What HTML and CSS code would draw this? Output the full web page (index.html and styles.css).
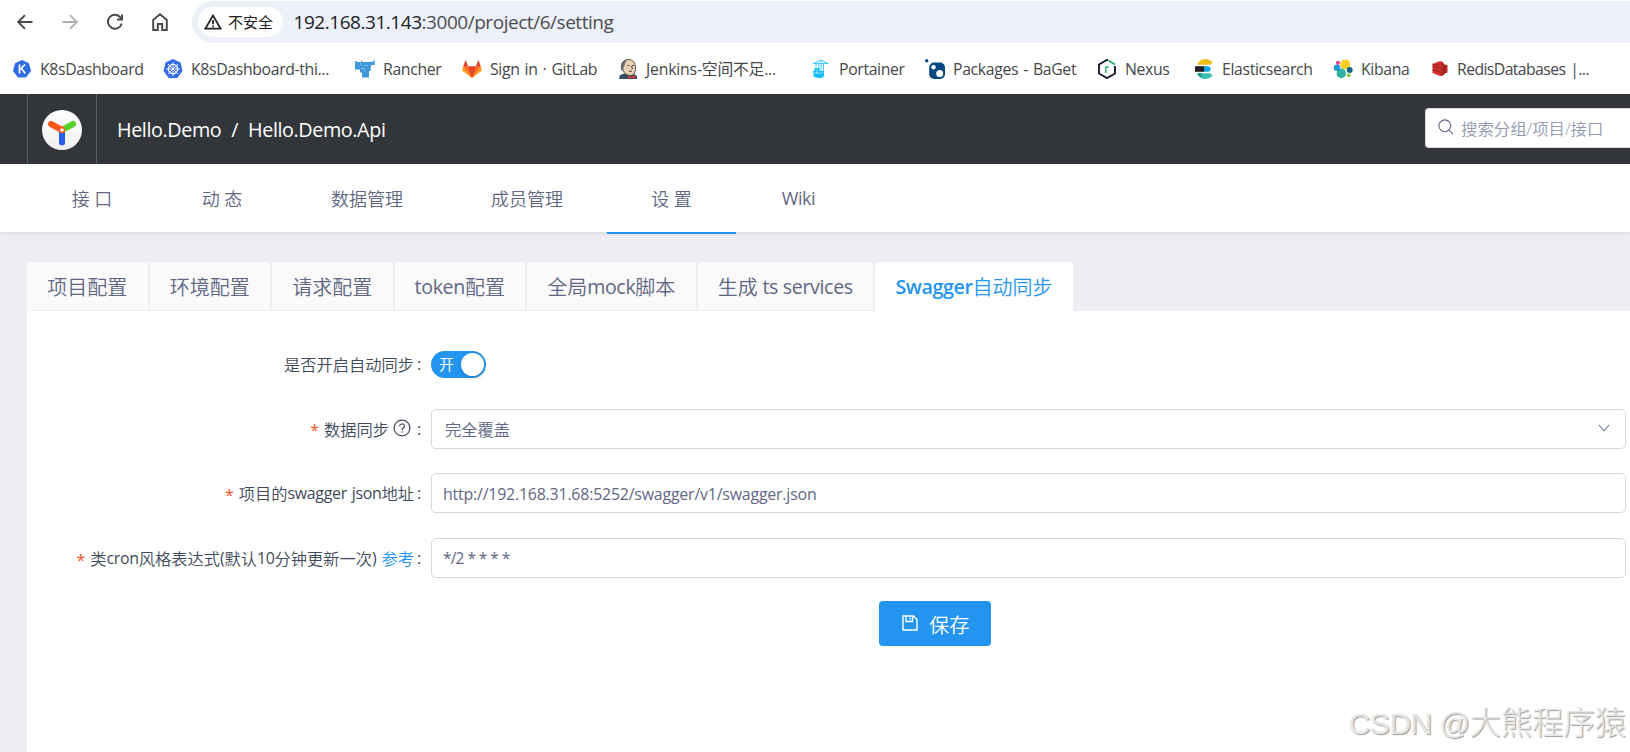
FILE: index.html
```html
<!DOCTYPE html>
<html lang="zh-CN">
<head>
<meta charset="utf-8">
<title>Hello.Demo.Api</title>
<link rel="stylesheet" href="styles.css">
</head>
<body>
<div class="toolbar">
  <div class="nav-buttons">
    <svg class="nav-icon" viewBox="0 0 20 20"><path d="M17.500 10H3.500M10 3.200 3.200 10l6.800 6.800"/></svg>
    <svg class="nav-icon disabled" viewBox="0 0 20 20"><path d="M2.500 10h14M10 3.200 16.800 10 10 16.800"/></svg>
    <svg class="nav-icon" viewBox="0 0 20 20"><path d="M16.700 11.500A7 7 0 1 1 15.500 5.500L17 7.300M17 2.500v5h-5"/></svg>
    <svg class="nav-icon" viewBox="0 0 20 20"><path d="M3.200 18V8L10 2.200 16.800 8v10h-4.600v-6H7.800v6z"/></svg>
  </div>
  <div class="omnibox">
    <div class="chip">
      <svg class="warn" viewBox="0 0 18 16"><path d="M9 1.500 1.300 14.700h15.400z"/><path d="M9 6v4.300M9 11.500v1.700"/></svg>
      <span>不安全</span>
    </div>
    <div class="url">192.168.31.143<span>:3000/project/6/setting</span></div>
  </div>
</div>
<div class="bookmarks">
  <div class="bm"><svg viewBox="0 0 20 20"><path fill="#326ce5" d="M10 1l7 3.300L19 12l-5 6.500H6L1 12l2-7.700z"/><path d="M7.500 5.500v9M13 5.500l-5 5M9.300 9.300l3.900 5.200" stroke="#fff" stroke-width="1.700" fill="none"/></svg><span>K8sDashboard</span></div>
  <div class="bm"><svg viewBox="0 0 20 20"><path fill="#326ce5" d="M10 0l7.500 3.600L19.500 12l-5.200 7H5.700L.5 12l2-8.400z"/><g stroke="#fff" fill="none"><circle cx="10" cy="10" r="4.600" stroke-width="1.400"/><path d="M10 3v14M3 10h14M5 5l10 10M15 5 5 15" stroke-width=".9"/></g></svg><span>K8sDashboard-thi...</span></div>
  <div class="bm"><svg viewBox="0 0 20 20"><path fill="#3d98d8" d="M0 2h1.500v1H6V1.500h1.200V3h9l1-.8.8 1.300L19 1l1 .5-.5 4.500H16l-.5 6h-1.500v6.500H7v-5h-2v-3H0z"/><path d="M6 9.500h3.500v3M6 6V3.500M9 6.500h4" stroke="#8cc8ee" fill="none" stroke-width=".8"/></svg><span>Rancher</span></div>
  <div class="bm"><svg viewBox="0 0 20 20"><path fill="#fca326" d="M10 19 0 11.500l1.200-4h17.600l1.200 4z"/><path fill="#fc6d26" d="m10 19-8.800-11.500h17.600z"/><path fill="#e24329" d="M10 19 6.300 7.500h7.400zM1.200 7.500 3.700 1l2.600 6.500zM18.800 7.500 16.300 1l-2.600 6.500z"/></svg><span>Sign in · GitLab</span></div>
  <div class="bm"><svg viewBox="0 0 20 20"><path fill="#335061" d="M1 20l1-4 6-2 8 1 3 2v3z"/><path fill="#e8d2b5" stroke="#4b423d" stroke-width=".9" d="M3.500 9C2.500 4 6 .5 10.500.5S17.800 4 17.500 9c0 4-1.500 7.500-5 7.500S6 15 5.500 11.500C4 12 3 10.500 3.500 9z"/><path fill="#6d6b6d" d="M3.600 10C2 4 6 .7 10 .7 6.500 2.500 7.500 5 6 7.500L5 11z"/><path d="M9.500 6.500h2M14 6.500h2M11 12.500l3-.5M13.500 7l1 3" stroke="#4b423d" fill="none"/><path fill="#e13b31" d="M10 16.500 13.500 18l3.500-1.800v3.600L13.500 18.500 10 20z"/></svg><span class="cjk">Jenkins-空间不足...</span></div>
  <div class="bm"><svg viewBox="0 0 20 20"><path d="M2 4.500h15.500M10 1v14M7.800 3.500v13M12.500 4.500v9M2.500 4.500 10 1l6.500 3.500M5 4.500V8" stroke="#2cc5ff" fill="none" stroke-width=".9"/><path fill="#13bef9" d="M2 12h1.500V9h5v3H13v5c-1.500 2-3 2-4.500 2S3.500 19 2.500 16.500z"/><path stroke="#fff" stroke-width=".5" d="M2 14h10M6 10v5" fill="none"/></svg><span>Portainer</span></div>
  <div class="bm"><svg viewBox="0 0 20 20"><circle cx="1.700" cy="1.700" r="1.700" fill="#004880"/><rect x="4.200" y="3.500" width="15.800" height="16.500" rx="5" fill="#004880"/><circle cx="8.500" cy="8.200" r="2.200" fill="#fff"/><circle cx="14.700" cy="14.500" r="3.500" fill="#fff"/></svg><span>Packages - BaGet</span></div>
  <div class="bm"><svg viewBox="0 0 20 20"><path d="M11 1.200 10 .9 2 5.500v9l8 4.600 8-4.600V7" stroke="#1b1c30" stroke-width="1.900" fill="none"/><path d="M11.500 1.500 18 5.500" stroke="#23a96b" stroke-width="1.900"/><path d="M8.700 14V7.500M8.700 9.500Q9.500 7.500 11.700 7.800" stroke="#23b36b" stroke-width="1.400" fill="none"/></svg><span>Nexus</span></div>
  <div class="bm"><svg viewBox="0 0 20 20"><path fill="#f0bf1a" d="M3 5.800C4.500 2 7.500 0 11 0c3.500 0 6 1.500 7.500 3.500-.8 1.600-2 2.300-3.500 2.300z"/><path fill="#231f20" d="M1 7.200h9v5.600H1z"/><path fill="#07a5de" d="M10 7.200h3.800a2.800 2.800 0 0 1 0 5.600H10z"/><path fill="#3ebeb0" d="M3 14.200h12c1.500 0 2.700.8 3.500 2.300C17 18.500 14.500 20 11 20c-3.500 0-6.500-2-8-5.800z"/><path fill="#2a9689" d="M3 14.200h4.500v4.600A8 8 0 0 1 3 14.200z"/></svg><span>Elasticsearch</span></div>
  <div class="bm"><svg viewBox="0 0 20 20"><ellipse cx="12.200" cy="5.400" rx="4.900" ry="5" fill="#f9cf28"/><ellipse cx="8.300" cy="14.400" rx="4.700" ry="4.900" fill="#2eb3a2"/><circle cx="5" cy="3.800" r="2.100" fill="#e8478b"/><circle cx="4" cy="8.800" r="3.300" fill="#2696d4"/><circle cx="15.600" cy="16.200" r="2" fill="#95c63d"/><circle cx="16.700" cy="11" r="3" fill="#17638e"/></svg><span>Kibana</span></div>
  <div class="bm redis"><svg viewBox="0 0 20 20"><path fill="#d4322d" d="M1.500 5 9 2l3 1v13.500L9 17l-7.500-3z"/><path fill="#b02a25" d="M10 6.500V3.500l3 .8v1l3.500.7v7.500l-3 1v1L10 17z"/><path d="m1.500 7.500 8 2.200M1.500 10.800l8 2.200M1.500 5l8 2M13 6v9" stroke="#8a1a17" fill="none" stroke-width=".8"/></svg><span>RedisDatabases |...</span></div>
</div>
<header class="header">
  <a class="logo"><svg viewBox="0 0 40 40"><defs><linearGradient id="disc" x1="0" y1="0" x2="0" y2="1"><stop offset="0" stop-color="#fff"/><stop offset="1" stop-color="#f0f0f0"/></linearGradient></defs><circle cx="20" cy="20" r="20" fill="url(#disc)"/><g stroke-width="6" stroke-linecap="round"><path d="M20 20v12.500" stroke="#2a5cf0"/><path d="m20 20 11-6" stroke="#57d02a"/><path d="M20 20 9 14" stroke="#ff561b"/></g><circle cx="20" cy="20" r="3" fill="#ff561b"/><circle cx="20" cy="20" r="1.800" fill="#fff"/></svg></a>
  <div class="crumbs"><span class="group">Hello.Demo</span><span class="slash">/</span><span class="proj">Hello.Demo.Api</span></div>
  <div class="search"><svg viewBox="0 0 16 16"><circle cx="6.800" cy="6.800" r="5.900"/><path d="m11 11.200 4 4"/></svg><span>搜索分组/项目/接口</span></div>
</header>
<nav class="menu">
  <a>接 口</a><a>动 态</a><a class="wide">数据管理</a><a class="wide">成员管理</a><a class="current">设 置</a><a class="wiki">Wiki</a>
</nav>
<main class="page">
  <div class="tabs">
    <a class="tab">项目配置</a><a class="tab">环境配置</a><a class="tab">请求配置</a><a class="tab t-token"><i>token</i>配置</a><a class="tab t-mock">全局<i>mock</i>脚本</a><a class="tab t-ts">生成<i> ts services</i></a><a class="tab active"><i>Swagger</i>自动同步</a>
  </div>
  <section class="panel">
    <form class="form">
      <div class="row"><label>是否开启自动同步<b>:</b></label><div class="switch"><span>开</span><em></em></div></div>
      <div class="row"><label><u>*</u>数据同步<svg class="help" viewBox="0 0 18 18"><circle cx="9" cy="9" r="7.900"/><path d="M6.600 7.200a2.400 2.200 0 1 1 3.500 1.900Q9 9.700 9 11M9 12.300v1.400"/></svg><b class="far">:</b></label><div class="field select"><span>完全覆盖</span><svg viewBox="0 0 12 8"><path d="m.8.800 5.200 6 5.200-6"/></svg></div></div>
      <div class="row"><label><u>*</u>项目的<i class="gap">swagger json</i>地址<b>:</b></label><div class="field"><i class="address">http://192.168.31.68:5252/swagger/v1/swagger.json</i></div></div>
      <div class="row"><label><u>*</u>类<i>cron</i>风格表达式<i>(</i>默认<i>10</i>分钟更新一次<i>)</i><a>参考</a><b>:</b></label><div class="field"><i class="cron">*/2 * * * *</i></div></div>
      <div class="actions"><button type="button"><svg viewBox="0 0 16 16"><path d="M1 1h10.500L15 4.500V15H1zM4 1v5.500h6.500V1"/><path d="M8 2.800v1.800"/></svg><span>保存</span></button></div>
    </form>
  </section>
</main>
<div class="watermark"><span>CSDN @</span>大熊程序猿</div>
</body>
</html>
```

FILE: styles.css
```css
* { box-sizing: border-box; }
html, body { margin: 0; height: 752px; overflow: hidden; }
body {
  background: #fff;
  font-family: "Open Sans", "Noto Sans CJK SC", sans-serif;
  font-size: 16px;
  font-weight: 350;
  color: #5f6784;
}
i { font-style: normal; font-size: .98em; letter-spacing: -.018em; white-space: pre; font-weight: 380; }
svg { display: block; flex: none; }

.toolbar { display: flex; height: 44px; padding-top: 1px; }
.nav-buttons { display: flex; align-items: center; gap: 25px; width: 192px; padding: 0 0 1px 14.500px; flex: none; }
.nav-icon { width: 20px; height: 20px; fill: none; stroke: #474747; stroke-width: 1.9; }
.nav-icon.disabled { stroke: #b0b0b0; }
.omnibox { display: flex; align-items: center; flex: 1; height: 42px; padding-left: 6px; background: #ecf0f9; border-radius: 21px 0 0 21px; }
.chip { display: flex; align-items: center; gap: 6px; width: 85px; height: 30px; padding-left: 6px; border-radius: 15px; background: #fff; color: #202124; font-size: 15px; font-weight: 400; white-space: nowrap; }
.chip span { line-height: 28px; }
.warn { width: 18px; height: 16px; fill: none; stroke: #202124; stroke-width: 1.7; }
.url { margin-left: 10.500px; font-size: 19px; font-weight: 400; letter-spacing: -.46px; color: #202124; white-space: nowrap; }
.url span { color: #4b4d50; }

.bookmarks { display: grid; grid-template-columns: 151px 192px 107px 156px 193px 114px 172px 97px 139px 98px 180px; align-items: center; height: 50px; padding-left: 12px; color: #45474a; font-size: 15.8px; font-weight: 380; letter-spacing: -.35px; word-spacing: 1.300px; }
.bm { display: flex; align-items: center; gap: 8px; height: 24px; line-height: 24px; white-space: nowrap; }
.bm svg { width: 20px; height: 20px; }
.cjk { padding-bottom: 1px; letter-spacing: -.2px; }
.redis { gap: 6px; letter-spacing: -.6px; }

.header { display: flex; align-items: center; height: 70px; padding-left: 27px; background: #32363a; }
.logo { display: flex; align-items: center; justify-content: center; width: 70px; height: 70px; border: solid #56626e; border-width: 0 1px; }
.logo svg { width: 40px; height: 40px; margin-top: 1px; }
.crumbs { display: flex; gap: 10px; flex: 1; padding: 1px 0 0 20px; color: #fff; font-size: 19.800px; font-weight: 400; letter-spacing: -.42px; white-space: nowrap; }
.search { display: flex; align-items: center; gap: 7px; width: 205px; height: 40px; margin-bottom: 2px; padding-left: 12px; border: 1px solid #d9d9d9; border-right: 0; border-radius: 4px 0 0 4px; background: #fff; color: #9299ae; font-size: 16.400px; white-space: nowrap; flex: none; }
.search svg { width: 16px; height: 16px; margin-bottom: 3px; fill: none; stroke: #5c6484; stroke-width: 1.1; }

.menu { display: flex; height: 68px; padding-left: 27px; font-size: 18px; position: relative; box-shadow: 0 1px 4px rgba(0, 21, 41, .1); }
.menu a { display: flex; align-items: center; justify-content: center; width: 130px; height: 70px; padding-bottom: 3px; white-space: nowrap; }
.menu .wide { width: 160px; }
.menu .current { width: 129px; border-bottom: 2px solid #2395f1; padding-bottom: 1px; }
.menu .wiki { width: 125px; font-weight: 400; letter-spacing: -.4px; }

.page { height: 520px; padding: 30px 0 0 27px; background: #eceef1; }
.tabs { display: flex; gap: 2px; height: 49px; font-size: 20px; }
.tab { display: flex; align-items: center; justify-content: center; width: 120.500px; height: 48px; border-radius: 4px 4px 0 0; background: #fafafa; white-space: nowrap; }
.t-token { width: 130.500px; }
.t-mock { width: 168.500px; }
.t-ts { width: 175.500px; }
.tab.active { width: 198px; height: 49px; padding-bottom: 1px; background: #fff; color: #2395f1; }
.tab.active i { font-weight: 600; font-size: 19.700px; letter-spacing: -.4px; }
.panel { height: 441px; padding-top: 21px; background: #fff; }
.form { width: 1598px; }
.row { display: flex; align-items: center; height: 64.600px; }
.row label { display: flex; align-items: center; justify-content: flex-end; width: 395px; margin-right: 9px; color: #404a5a; font-size: 16.250px; white-space: nowrap; flex: none; }
label u { margin-right: 5px; padding-top: 3px; color: #f5541f; font-size: 16px; font-weight: 400; text-decoration: none; }
label b { margin-left: 3px; width: 5px; font-weight: 400; }
label b.far { margin-left: 6px; }
label a { margin-left: 5px; color: #2395f1; }
label .gap { word-spacing: 1px; }
.help { width: 18px; height: 18px; margin: 0 0 2px 4px; fill: none; stroke: #404a5a; stroke-width: 1.200; }
.switch { display: flex; align-items: center; justify-content: space-between; width: 55px; height: 27px; padding: 0 2px 0 8px; border-radius: 14px; background: #2395f1; color: #fff; font-size: 15px; }
.switch span { padding-bottom: 2px; font-weight: 400; }
.switch em { width: 23px; height: 23px; border-radius: 50%; background: #fff; box-shadow: 0 2px 4px rgba(0, 35, 11, .2); }
.field { display: flex; align-items: center; width: 1195px; height: 40px; padding: 0 11px; border: 1px solid #d9d9d9; border-radius: 5px; font-size: 16.250px; flex: none; }
.field .address { padding-top: 1px; letter-spacing: -.2px; }
.field .cron { font-size: 15.500px; letter-spacing: -.8px; word-spacing: .5px; }
.select { justify-content: space-between; padding: 0 15px 0 13px; }
.select svg { width: 12px; height: 8px; margin-bottom: 2px; fill: none; stroke: #7e88a3; stroke-width: 1.200; }
.actions { display: flex; padding: 11px 0 0 852px; }
button { display: flex; align-items: center; gap: 11px; width: 112px; height: 45px; padding: 0 0 0 23px; border: 0; border-radius: 4px; background: #2395f1; color: #fff; font: inherit; font-size: 20.300px; white-space: nowrap; }
button svg { width: 16px; height: 16px; margin-bottom: 2px; fill: none; stroke: #fff; stroke-width: 1.400; }
.watermark { position: absolute; right: 4px; bottom: 5px; color: #e6e6e6; font-family: "Liberation Sans", "Noto Sans CJK SC", sans-serif; font-size: 31.300px; line-height: 46px; font-weight: 300; text-shadow: 1px 1px 1px #999; white-space: nowrap; }
.watermark span { font-size: 30px; letter-spacing: -.500px; }
```
